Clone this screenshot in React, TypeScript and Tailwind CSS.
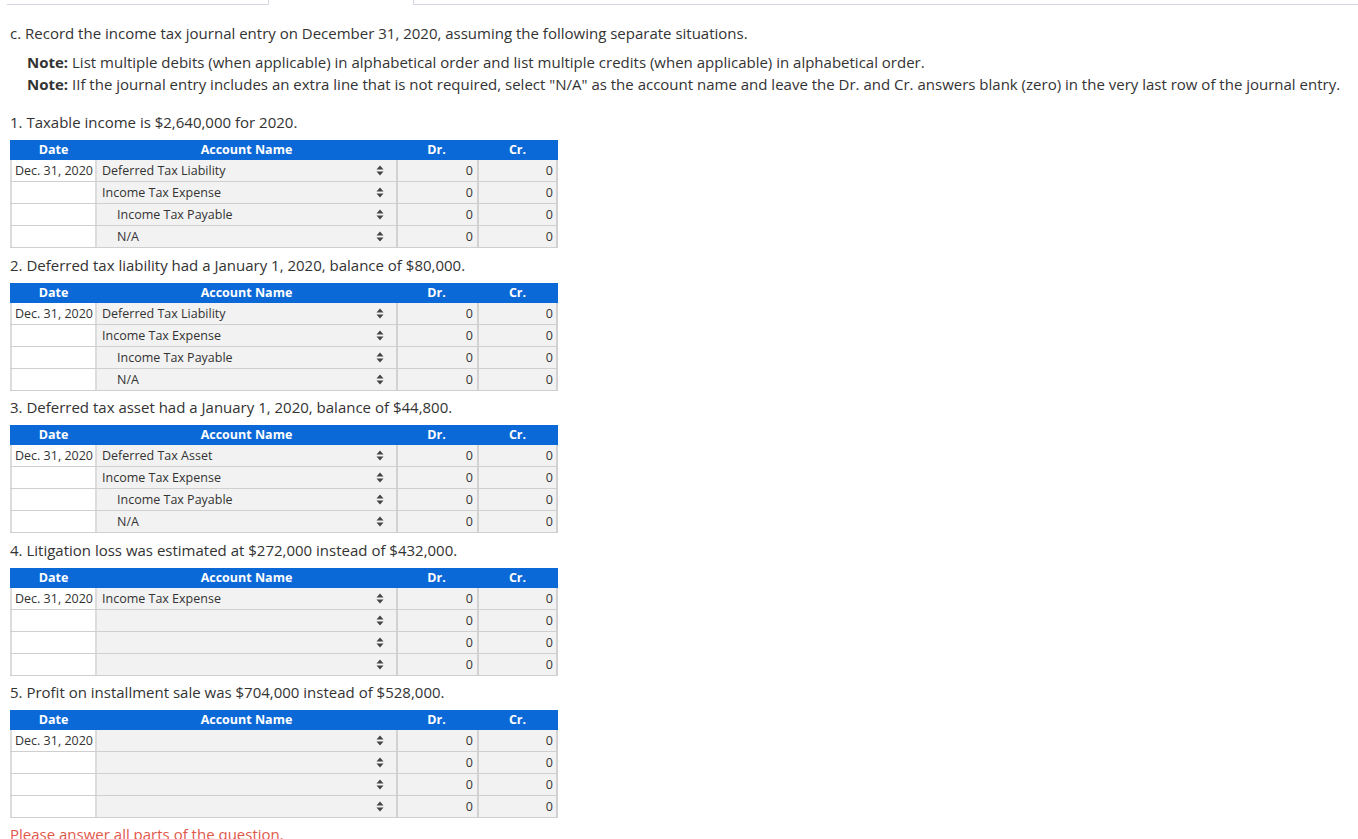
import React from 'react';

interface Row {
  account: string;
  indent?: boolean;
}

interface Situation {
  title: string;
  rows: Row[];
}

const situations: Situation[] = [
  {
    title: '1. Taxable income is $2,640,000 for 2020.',
    rows: [
      { account: 'Deferred Tax Liability' },
      { account: 'Income Tax Expense' },
      { account: 'Income Tax Payable', indent: true },
      { account: 'N/A', indent: true },
    ],
  },
  {
    title: '2. Deferred tax liability had a January 1, 2020, balance of $80,000.',
    rows: [
      { account: 'Deferred Tax Liability' },
      { account: 'Income Tax Expense' },
      { account: 'Income Tax Payable', indent: true },
      { account: 'N/A', indent: true },
    ],
  },
  {
    title: '3. Deferred tax asset had a January 1, 2020, balance of $44,800.',
    rows: [
      { account: 'Deferred Tax Asset' },
      { account: 'Income Tax Expense' },
      { account: 'Income Tax Payable', indent: true },
      { account: 'N/A', indent: true },
    ],
  },
  {
    title: '4. Litigation loss was estimated at $272,000 instead of $432,000.',
    rows: [{ account: 'Income Tax Expense' }, { account: '' }, { account: '' }, { account: '' }],
  },
  {
    title: '5. Profit on installment sale was $704,000 instead of $528,000.',
    rows: [{ account: '' }, { account: '' }, { account: '' }, { account: '' }],
  },
];

function SortArrows() {
  return (
    <svg width="8" height="11" viewBox="0 0 8 11" className="shrink-0">
      <path d="M4 0.5 L7.5 4.5 H0.5 Z" fill="#444" />
      <path d="M4 10.5 L7.5 6.5 H0.5 Z" fill="#444" />
    </svg>
  );
}

function JournalTable({ rows }: { rows: Row[] }) {
  return (
    <div className="w-[548px] text-[12.5px] text-[#333]">
      <div className="grid grid-cols-[87px_299px_81px_81px] h-[20px] bg-[#0b69d7] text-white font-bold leading-[19px]">
        <div className="text-center">Date</div>
        <div className="text-center">Account Name</div>
        <div className="text-center">Dr.</div>
        <div className="text-center">Cr.</div>
      </div>
      {rows.map((r, i) => (
        <div
          key={i}
          className="grid grid-cols-[87px_299px_81px_81px] h-[22px] border-b border-[#cfcfcf] leading-[21px] overflow-hidden"
        >
          <div className="bg-white border-l-2 border-r-2 border-[#dcdcdc] pl-[3px] whitespace-nowrap">
            {i === 0 ? 'Dec. 31, 2020' : ''}
          </div>
          <div className="bg-[#f2f2f2] flex items-center justify-between pr-[12px]">
            <span className={r.indent ? 'pl-[20px]' : 'pl-[5px]'}>{r.account}</span>
            <SortArrows />
          </div>
          <div className="bg-[#f2f2f2] border-l-2 border-[#d2d2d2] text-right pr-[4px]">0</div>
          <div className="bg-[#f2f2f2] border-l-2 border-r-2 border-[#d2d2d2] text-right pr-[3px]">0</div>
        </div>
      ))}
    </div>
  );
}

export default function App() {
  return (
    <div className="w-[1358px] h-[839px] overflow-hidden bg-white text-[#333] font-['Open_Sans',_'Liberation_Sans',_sans-serif]">
      <div className="flex h-[5px]">
        <div className="ml-[7px] w-[262px] border-b border-r border-[#d3d8e0]" />
        <div className="ml-[144px] flex-1 border-b border-l border-[#d3d8e0]" />
      </div>
      <div className="pl-[10px]">
        <p className="mt-[18px] text-[15px] leading-[20px]">
          c. Record the income tax journal entry on December 31, 2020, assuming the following separate situations.
        </p>
        <div className="mt-[8px] pl-[17px] text-[15px] leading-[22px]">
          <p>
            <span className="font-bold">Note:</span> List multiple debits (when applicable) in alphabetical order and
            list multiple credits (when applicable) in alphabetical order.
          </p>
          <p>
            <span className="font-bold">Note:</span> IIf the journal entry includes an extra line that is not
            required, select "N/A" as the account name and leave the Dr. and Cr. answers blank (zero) in the very last
            row of the journal entry.
          </p>
        </div>
        {situations.map((s, i) => (
          <div key={i}>
            <p className={`${i === 0 ? 'mt-[17px]' : 'mt-[6.5px]'} mb-[8px] text-[15px] leading-[20px]`}>{s.title}</p>
            <JournalTable rows={s.rows} />
          </div>
        ))}
        <p className="mt-[6px] text-[15px] leading-[20px] text-[#e0574a]">Please answer all parts of the question.</p>
      </div>
    </div>
  );
}
